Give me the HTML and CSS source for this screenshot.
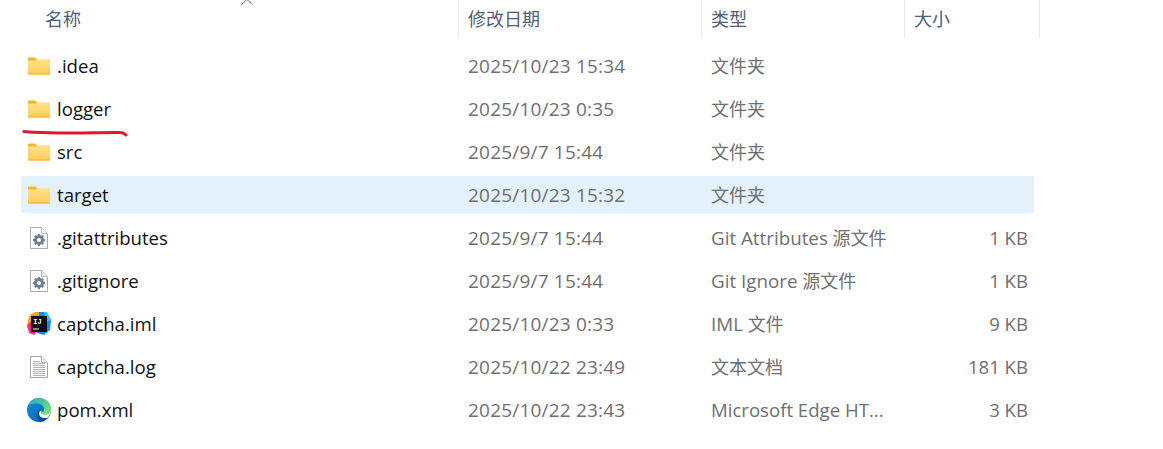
FILE: index.html
```html
<!DOCTYPE html>
<html lang="zh-CN">
<head>
<meta charset="utf-8">
<title>captcha</title>
<link rel="stylesheet" href="styles.css">
</head>
<body>
<svg width="0" height="0" class="defs">
  <defs>
    <linearGradient id="fg" x1="0" y1="0" x2="0" y2="1"><stop offset="0" stop-color="#ffe28a"/><stop offset="1" stop-color="#fdcd55"/></linearGradient>
    <symbol id="folder" viewBox="0 0 24 18">
      <path d="M1 1.500a1 1 0 0 1 1-1h6l2 2.200h13V6H1z" fill="#f6b51e"/>
      <path d="M1 3.500h8.500L11 2.600h12V17.500H1z" fill="url(#fg)"/>
      <path d="M1 16.500h22v1H1z" fill="#efb52f"/>
    </symbol>
    <symbol id="gear" viewBox="0 0 24 24">
      <path d="M3.500 1.500h11l6 6v15h-17z" fill="#fcfcfc" stroke="#a9acae"/>
      <path d="M14.500 1.500v6h6" fill="#f0f0f0" stroke="#bcbfc1"/>
      <circle cx="12" cy="14" r="3.800" fill="none" stroke="#6e808e" stroke-width="2.600"/>
      <path d="M12 8v12M6 14h12M7.800 9.800l8.400 8.400M16.200 9.800l-8.400 8.400" stroke="#6e808e" stroke-width="2"/>
      <circle cx="12" cy="14" r="2" fill="#fff"/>
    </symbol>
  </defs>
</svg>

<main class="view">
  <header class="head">
    <div class="hcell hname">名称</div>
    <div class="hcell">修改日期</div>
    <div class="hcell">类型</div>
    <div class="hcell">大小</div>
    <svg class="sort" width="14" height="6" viewBox="0 0 14 6"><path d="M1.500 5.500 7 .5l5.500 5" fill="none" stroke="#666" stroke-width="1"/></svg>
  </header>

  <section class="rows">
    <div class="row">
      <div class="name"><svg class="ico" viewBox="0 0 24 18"><use href="#folder"/></svg><span>.idea</span></div>
      <div class="date">2025/10/23 15:34</div><div class="type cjk">文件夹</div><div class="size"></div>
    </div>
    <div class="row">
      <div class="name"><svg class="ico" viewBox="0 0 24 18"><use href="#folder"/></svg><span>logger</span></div>
      <div class="date">2025/10/23 0:35</div><div class="type cjk">文件夹</div><div class="size"></div>
    </div>
    <div class="row">
      <div class="name"><svg class="ico" viewBox="0 0 24 18"><use href="#folder"/></svg><span>src</span></div>
      <div class="date">2025/9/7 15:44</div><div class="type cjk">文件夹</div><div class="size"></div>
    </div>
    <div class="row selected">
      <div class="name"><svg class="ico" viewBox="0 0 24 18"><use href="#folder"/></svg><span>target</span></div>
      <div class="date">2025/10/23 15:32</div><div class="type cjk">文件夹</div><div class="size"></div>
    </div>
    <div class="row">
      <div class="name"><svg class="ico tall" viewBox="0 0 24 24"><use href="#gear"/></svg><span>.gitattributes</span></div>
      <div class="date">2025/9/7 15:44</div><div class="type"><span class="lat">Git Attributes</span> 源文件</div><div class="size">1 KB</div>
    </div>
    <div class="row">
      <div class="name"><svg class="ico tall" viewBox="0 0 24 24"><use href="#gear"/></svg><span>.gitignore</span></div>
      <div class="date">2025/9/7 15:44</div><div class="type"><span class="lat">Git Ignore</span> 源文件</div><div class="size">1 KB</div>
    </div>
    <div class="row">
      <div class="name">
        <svg class="ico tall" viewBox="0 0 24 24">
          <path d="M3 3 8 0h5L9 10 0 16 1 8z" fill="#f9a11b"/>
          <path d="M0 13l6-5 4 12-3 3-5-2z" fill="#fe2e7c"/>
          <path d="M12 0h7l5 8-1 10-6 5-7-2z" fill="#0a8cf5"/>
          <path d="M17 0h3l4 8-5 2z" fill="#25c9f5"/>
          <rect x="4" y="4" width="16" height="16" fill="#120c0e"/>
          <text x="6.200" y="12" class="ij">IJ</text>
          <rect x="6" y="16.500" width="6" height="1" fill="#fff"/>
        </svg>
        <span>captcha.iml</span>
      </div>
      <div class="date">2025/10/23 0:33</div><div class="type"><span class="lat">IML</span> 文件</div><div class="size">9 KB</div>
    </div>
    <div class="row">
      <div class="name">
        <svg class="ico tall" viewBox="0 0 24 24">
          <path d="M3.500 1.500h11l6 6v15h-17z" fill="#fff" stroke="#a3a6a8"/>
          <path d="M14.500 1.500v6h6" fill="#eee" stroke="#b5b8ba"/>
          <path d="M6 6.500h7M6 8.500h12M6 10.500h12M6 12.500h12M6 14.500h12M6 16.500h12M6 18.500h12M6 20.500h12" stroke="#b0b3b5" stroke-width="1"/>
        </svg>
        <span>captcha.log</span>
      </div>
      <div class="date">2025/10/22 23:49</div><div class="type cjk">文本文档</div><div class="size">181 KB</div>
    </div>
    <div class="row">
      <div class="name">
        <svg class="ico tall" viewBox="0 0 24 24">
          <defs>
            <linearGradient id="e1" x1="0" y1="0" x2="1" y2="1"><stop offset="0" stop-color="#1092e0"/><stop offset="1" stop-color="#0c59a8"/></linearGradient>
            <linearGradient id="e2" x1="0" y1="0" x2="1" y2=".8"><stop offset="0" stop-color="#1aa8d8"/><stop offset="1" stop-color="#7ee36a"/></linearGradient>
          </defs>
          <circle cx="12" cy="12" r="12" fill="url(#e1)"/>
          <path d="M1 8C3 2.500 7.500 0 12 0c7 0 12 5.500 12 12 0 3-2.500 4.500-5.500 4.500-2 0-4-.7-4.500-1.800 2-.8 3-2 3-3.700 0-3-3-5.500-6.500-5.500C6.500 5.500 3 6 1 8z" fill="url(#e2)"/>
          <path d="M14.300 11.500c-2 .8-3.800 2-4 4.500-.2 3 1 5.800 3 8 2.800-.4 5.500-2 7.500-4.600-.7.400-1.800.6-3.300.6-3 0-5.500-2-5.500-4.500 0-1.800 1.300-3 2.300-4z" fill="#0a4a94"/>
          <path d="M14.300 12.200c-1 1-2.300 1.900-2.300 3.300 0 2.500 2.500 4.500 5.500 4.500 1.500 0 2.600-.2 3.300-.6 1.800-2 3.200-4.600 3.200-7.400 0 3-2.500 4.500-5.500 4.500-2 0-4-.7-4.500-1.800.4-.8.500-1.600.3-2.500z" fill="#fff"/>
        </svg>
        <span>pom.xml</span>
      </div>
      <div class="date">2025/10/22 23:43</div><div class="type"><span class="lat lat-cut">Microsoft Edge HT...</span></div><div class="size">3 KB</div>
    </div>
  </section>

  <svg class="mark" width="110" height="10" viewBox="0 0 110 10"><path d="M2 2.500C15 4 20 3 36 4 60 4.500 80 3 98 3.500c3 0 5 1.500 6 2.500" fill="none" stroke="#e3152f" stroke-width="3" stroke-linecap="round"/></svg>
</main>
</body>
</html>
```
FILE: styles.css
```css
* { box-sizing: border-box; }
html, body { margin: 0; height: 100%; background: #fff; overflow: hidden; }
body { font-family: "Open Sans", "Noto Sans CJK SC", "Noto Sans", sans-serif; font-size: 18px; }
.defs { position: absolute; }
.view { position: relative; height: 449px; }

.head {
  position: relative;
  display: grid;
  grid-template-columns: 438px 243px 203px 135px;
  margin-left: 21px;
  height: 38px;
}
.hcell {
  border-right: 1px solid #e8e8e8;
  padding-left: 9px;
  line-height: 36px;
  color: #4c607a;
  font-family: "Noto Sans CJK SC", sans-serif;
  font-size: 18px;
}
.hcell.hname { padding-left: 24px; }
.sort { position: absolute; left: 219px; top: -1px; }

.rows { display: flex; flex-direction: column; gap: 6px; margin: 9px 0 0 21px; width: 1013px; }
.row {
  display: grid;
  grid-template-columns: 437px 243px 203px 130px;
  align-items: center;
  height: 37px;
  border-radius: 2px;
}
.row.selected { background: #e3f1fc; }
.name { display: flex; align-items: center; gap: 6px; padding-left: 6px; color: #111; font-size: 18.6px; }
.ico { width: 24px; height: 18px; flex: none; }
.ico.tall { height: 24px; }
.date { padding-left: 10px; color: #6f6f6f; white-space: nowrap; font-size: 19px; letter-spacing: .2px; }
.type { padding-left: 10px; color: #6f6f6f; white-space: nowrap; }
.type.cjk { padding-bottom: 2px; }
.lat { font-size: 18.8px; }
.lat-cut { font-size: 18.6px; }
.size { padding-right: 6px; text-align: right; color: #6f6f6f; font-size: 18.6px; }
.ij { font: bold 7px "Liberation Mono", monospace; fill: #fff; }
.mark { position: absolute; left: 22px; top: 129px; }
```
